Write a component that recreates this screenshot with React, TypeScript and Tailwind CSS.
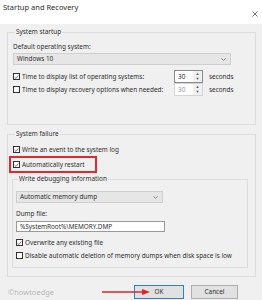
import type { ReactNode } from "react";

function CheckBox({ checked }: { checked?: boolean }) {
  return (
    <span className="flex h-[7px] w-[7px] shrink-0 items-center justify-center border border-[#333] bg-white">
      {checked && (
        <svg viewBox="0 0 8 8" className="h-[6px] w-[6px]">
          <path d="M1 4.3 L3.1 6.3 L7 1.6" fill="none" stroke="#222" strokeWidth="1" />
        </svg>
      )}
    </span>
  );
}

function Chevron() {
  return (
    <svg viewBox="0 0 8 5" className="h-[3px] w-[5px]">
      <path d="M0.5 0.5 L4 4 L7.5 0.5" fill="none" stroke="#555" strokeWidth="1" />
    </svg>
  );
}

function CheckRow({ checked, children }: { checked?: boolean; children: ReactNode }) {
  return (
    <div className="flex h-[13px] items-center gap-[2px]">
      <CheckBox checked={checked} />
      <span>{children}</span>
    </div>
  );
}

function Spin({ disabled }: { disabled?: boolean }) {
  return (
    <div className={`flex h-[13px] w-[29px] border ${disabled ? "border-[#d4d4d4]" : "border-[#8a8a8a]"}`}>
      <span className={`flex flex-1 items-center bg-white pl-[3px] ${disabled ? "text-[#9a9a9a]" : ""}`}>30</span>
      <span className="flex w-[9px] flex-col items-center justify-center gap-[1px] bg-[#f0f0f0] text-[4px] leading-[4px] text-[#555]">
        <span>▲</span>
        <span>▼</span>
      </span>
    </div>
  );
}

export default function App() {
  return (
    <div className="relative h-[300px] w-[262px] overflow-hidden bg-[#f0f0f0] font-['Noto_Sans',sans-serif] text-[6.4px] leading-[8px] text-[#2e2e2e]">
      <header className="flex h-[24px] items-start justify-between bg-white">
        <span className="ml-[3px] mt-[2px] text-[7.5px] leading-[10px]">Startup and Recovery</span>
        <svg viewBox="0 0 6 6" className="mr-[4px] mt-[11px] h-[6px] w-[6px]">
          <path d="M0.5 0.5 L5.5 5.5 M5.5 0.5 L0.5 5.5" stroke="#333" strokeWidth="0.7" />
        </svg>
      </header>

      <div className="flex flex-col pl-[7px] pr-[6px]">
        <fieldset className="mt-[4px] h-[97px] border border-[#dcdcdc] px-[5px] pt-[7px]">
          <legend className="ml-[2px] px-[1px] leading-[8px]">System startup</legend>
          <div>Default operating system:</div>
          <div className="mt-[2px] flex h-[12px] w-[218px] items-center justify-between border border-[#cfcfcf] bg-[#e6e6e6] pl-[3px] pr-[4px]">
            <span>Windows 10</span>
            <Chevron />
          </div>
          <div className="mt-[5px] flex h-[13px] items-center">
            <div className="w-[161px]">
              <CheckRow checked>Time to display list of operating systems:</CheckRow>
            </div>
            <Spin />
            <span className="ml-[6px]">seconds</span>
          </div>
          <div className="flex h-[13px] items-center">
            <div className="w-[161px]">
              <CheckRow>Time to display recovery options when needed:</CheckRow>
            </div>
            <Spin disabled />
            <span className="ml-[6px]">seconds</span>
          </div>
        </fieldset>

        <fieldset className="mt-[5px] h-[147px] border border-[#dcdcdc] pl-[4px] pt-[5px]">
          <legend className="ml-[3px] px-[1px] leading-[8px]">System failure</legend>
          <div className="pl-[1px]">
            <CheckRow checked>Write an event to the system log</CheckRow>
          </div>
          <div className="-ml-[3px] flex h-[17px] w-[88px] items-center border-2 border-[#de2b2f] pl-[2px]">
            <CheckRow checked>Automatically restart</CheckRow>
          </div>

          <fieldset className="mt-[2px] h-[93px] w-[236px] border border-[#dcdcdc] px-[3px] pt-[8px]">
            <legend className="ml-[2px] px-[1px] leading-[8px]">Write debugging information</legend>
            <div className="flex h-[12px] w-[147px] items-center justify-between border border-[#cfcfcf] bg-[#e6e6e6] pl-[3px] pr-[4px]">
              <span>Automatic memory dump</span>
              <Chevron />
            </div>
            <div className="mt-[7px]">Dump file:</div>
            <div className="mt-[3px] flex h-[11px] w-[149px] items-center border border-[#9a9a9a] bg-white pl-[3px]">
              %SystemRoot%\MEMORY.DMP
            </div>
            <div className="mt-[4px]">
              <CheckRow checked>Overwrite any existing file</CheckRow>
              <CheckRow>Disable automatic deletion of memory dumps when disk space is low</CheckRow>
            </div>
          </fieldset>
        </fieldset>
      </div>

      <footer className="mt-[8px] flex h-[14px] items-center pl-[8px] pr-[24px]">
        <span className="text-[7.5px] text-[#b8b8b8]">©howtoedge</span>
        <div className="ml-auto flex gap-[7px]">
          <button className="flex h-[14px] w-[50px] items-center justify-center border border-[#2b7fd6] bg-[#e1e1e1]">
            OK
          </button>
          <button className="flex h-[14px] w-[47px] items-center justify-center border border-[#adadad] bg-[#e1e1e1]">
            Cancel
          </button>
        </div>
      </footer>

      <svg viewBox="0 0 50 8" className="absolute left-[102px] top-[288px] h-[8px] w-[50px]">
        <path d="M0 4 H42" stroke="#d9262b" strokeWidth="1.6" />
        <path d="M40 1 L48 4 L40 7 Z" fill="#d9262b" />
      </svg>
    </div>
  );
}
